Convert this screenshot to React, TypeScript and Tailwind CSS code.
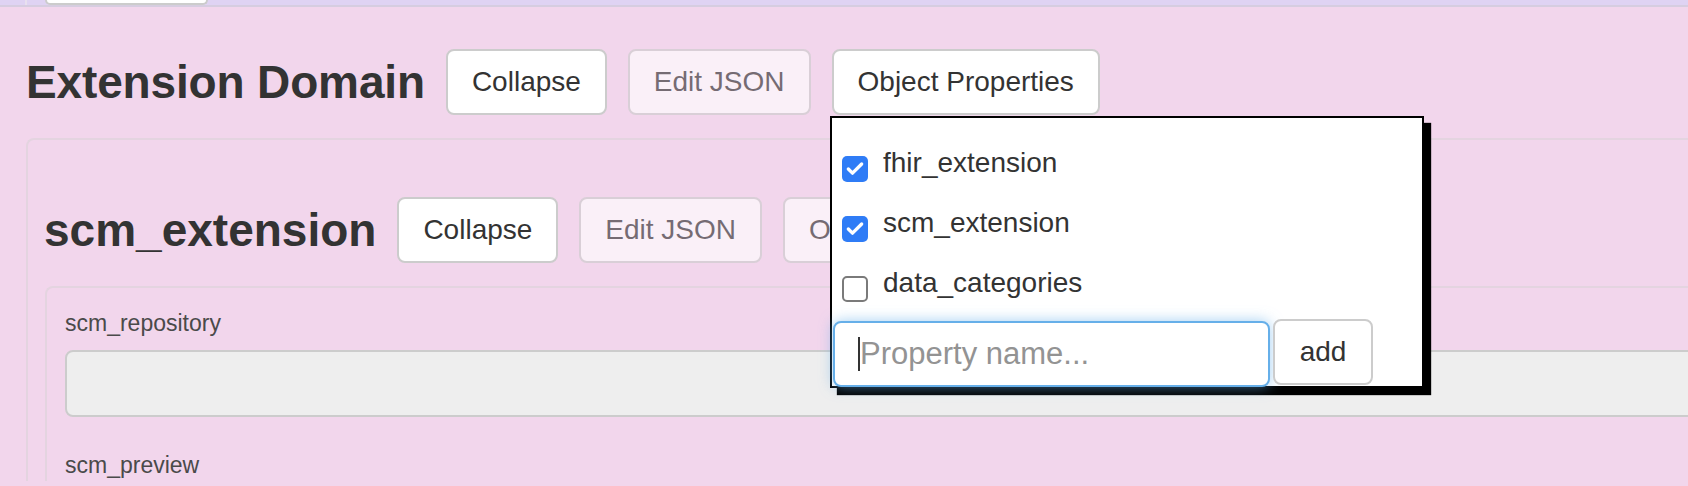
import { Check } from 'lucide-react';

const btn =
  'h-[66px] px-[24px] rounded-lg border-2 border-[#cccccc] bg-white text-[28px] leading-[40px] text-[#333333] whitespace-nowrap';

function Box({ checked }: { checked: boolean }) {
  if (checked) {
    return (
      <div className="mt-[13px] w-[26px] h-[26px] rounded-[5px] bg-[#2f7cf6] flex items-center justify-center shrink-0">
        <Check className="w-[20px] h-[20px] text-white stroke-[4]" />
      </div>
    );
  }
  return <div className="mt-[13px] w-[26px] h-[26px] rounded-[5px] border-2 border-[#7a7a7a] bg-white shrink-0" />;
}

export default function App() {
  const props = [
    { name: 'fhir_extension', on: true },
    { name: 'scm_extension', on: true },
    { name: 'data_categories', on: false },
  ];

  return (
    <div className="relative w-full h-[486px] overflow-hidden bg-[#f2d6ec] text-[#333333] font-['Liberation_Sans',Arial,sans-serif]">
      {/* tail of previous panel */}
      <div className="h-[7px] bg-[#dfd3f3] border-b-2 border-[#d6cde0] flex">
        <div className="ml-[25px] border-l-2 border-[#e8e0ef] pl-[18px]">
          <div className="w-[163px] h-[5px] bg-white border-2 border-t-0 border-[#cccccc] rounded-b-md" />
        </div>
      </div>

      {/* Extension Domain row */}
      <div className="mt-[42px] pl-[26px] flex items-center gap-[21px]">
        <h1 className="text-[46px] font-bold leading-none tracking-[-0.15px]">Extension Domain</h1>
        <button className={btn}>Collapse</button>
        <button className={`${btn} opacity-65`}>Edit JSON</button>
        <button className={btn}>Object Properties</button>
      </div>

      {/* scm_extension card */}
      <div className="ml-[26px] mt-[23px] border-l-2 border-t-2 border-[#e4d4e0] rounded-tl-lg">
        <div className="pt-[57px] pl-[16px] flex items-center gap-[21px]">
          <h2 className="text-[46px] font-bold leading-none">scm_extension</h2>
          <button className={btn}>Collapse</button>
          <button className={`${btn} opacity-65`}>Edit JSON</button>
          <button className={`${btn} opacity-65`}>Object Properties</button>
        </div>

        <div className="ml-[17px] mt-[23px] border-l-2 border-t-2 border-[#e4d4e0] rounded-tl-lg pl-[18px] pt-[19px]">
          <div className="text-[23px] leading-[32px] text-[#4a4a4a]">scm_repository</div>
          <div className="mt-[11px] h-[67px] w-[1700px] rounded-lg border-2 border-[#cccccc] bg-[#eeeeee]" />
          <div className="mt-[32px] text-[23px] leading-[32px] text-[#4a4a4a]">scm_preview</div>
        </div>
      </div>

      {/* Object Properties popup */}
      <div className="absolute left-[830px] top-[116px] w-[594px] h-[272px] bg-white border-2 border-black shadow-[7px_7px_1px_#000]">
        <div className="pt-[25px] pl-[10px] flex flex-col gap-[20px]">
          {props.map(p => (
            <label key={p.name} className="flex items-start gap-[15px] h-[40px]">
              <Box checked={p.on} />
              <span className="text-[28px] leading-[40px] text-[#333333]">{p.name}</span>
            </label>
          ))}
        </div>
        <div className="mt-[16px] ml-[1px] flex items-start gap-[3px]">
          <div className="mt-[2px] w-[437px] h-[66px] rounded-lg border-2 border-[#66afe9] bg-white shadow-[0_0_14px_rgba(102,175,233,0.6)] flex items-center pl-[23px]">
            <span className="w-[2px] h-[34px] bg-[#333333]" />
            <span className="text-[31px] text-[#939393]">Property name...</span>
          </div>
          <button className={`${btn} w-[100px] px-0`}>add</button>
        </div>
      </div>
    </div>
  );
}
